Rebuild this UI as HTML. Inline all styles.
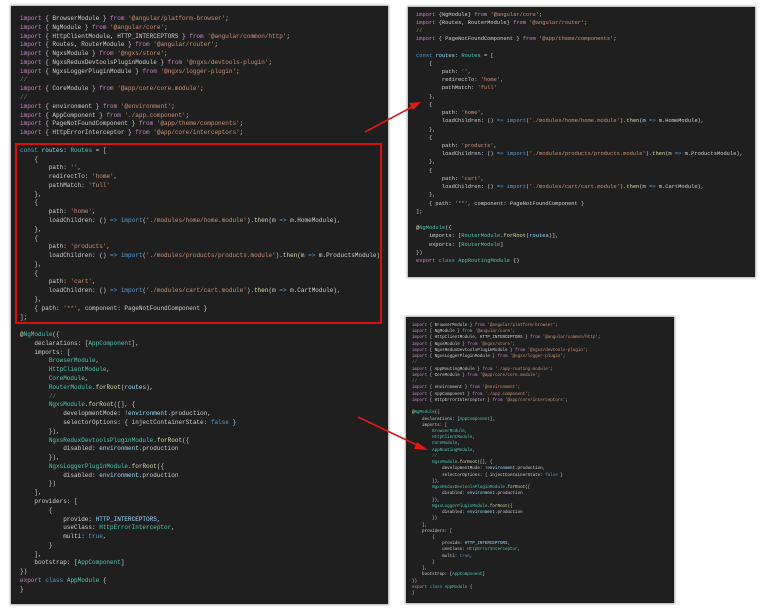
<!DOCTYPE html>
<html><head><meta charset="utf-8">
<style>
html,body{margin:0;padding:0;background:#fff;width:768px;height:610px;overflow:hidden;position:relative}
.p{position:absolute;background:#1f1f1f;box-shadow:0 0 2px 1px #aaa;}
pre{position:absolute;margin:0;font-family:"Liberation Mono",monospace;color:#d0d0d0;white-space:pre}
.k{color:#c586c0}.s{color:#ce9178}.c{color:#6a9955}.b{color:#569cd6}.t{color:#4ec9b0}.f{color:#dcdcaa}.v{color:#9cdcfe}
</style></head><body>

<div class="p" style="left:11px;top:6px;width:377px;height:598px"></div>
<pre style="left:20px;top:15px;font-size:6px;line-height:8.78px"><span class="k">import</span> { BrowserModule } <span class="k">from</span> <span class="s">'@angular/platform-browser'</span>;
<span class="k">import</span> { NgModule } <span class="k">from</span> <span class="s">'@angular/core'</span>;
<span class="k">import</span> { HttpClientModule, HTTP_INTERCEPTORS } <span class="k">from</span> <span class="s">'@angular/common/http'</span>;
<span class="k">import</span> { Routes, RouterModule } <span class="k">from</span> <span class="s">'@angular/router'</span>;
<span class="k">import</span> { NgxsModule } <span class="k">from</span> <span class="s">'@ngxs/store'</span>;
<span class="k">import</span> { NgxsReduxDevtoolsPluginModule } <span class="k">from</span> <span class="s">'@ngxs/devtools-plugin'</span>;
<span class="k">import</span> { NgxsLoggerPluginModule } <span class="k">from</span> <span class="s">'@ngxs/logger-plugin'</span>;
<span class="c">//</span>
<span class="k">import</span> { CoreModule } <span class="k">from</span> <span class="s">'@app/core/core.module'</span>;
<span class="c">//</span>
<span class="k">import</span> { environment } <span class="k">from</span> <span class="s">'@environment'</span>;
<span class="k">import</span> { AppComponent } <span class="k">from</span> <span class="s">'./app.component'</span>;
<span class="k">import</span> { PageNotFoundComponent } <span class="k">from</span> <span class="s">'@app/theme/components'</span>;
<span class="k">import</span> { HttpErrorInterceptor } <span class="k">from</span> <span class="s">'@app/core/interceptors'</span>;

<span class="b">const</span> <span class="v">routes</span>: <span class="t">Routes</span> = [
    {
        path: <span class="s">''</span>,
        redirectTo: <span class="s">'home'</span>,
        pathMatch: <span class="s">'full'</span>
    },
    {
        path: <span class="s">'home'</span>,
        loadChildren: () <span class="b">=&gt;</span> <span class="b">import</span>(<span class="s">'./modules/home/home.module'</span>).<span class="f">then</span>(m <span class="b">=&gt;</span> m.HomeModule),
    },
    {
        path: <span class="s">'products'</span>,
        loadChildren: () <span class="b">=&gt;</span> <span class="b">import</span>(<span class="s">'./modules/products/products.module'</span>).<span class="f">then</span>(m <span class="b">=&gt;</span> m.ProductsModule),
    },
    {
        path: <span class="s">'cart'</span>,
        loadChildren: () <span class="b">=&gt;</span> <span class="b">import</span>(<span class="s">'./modules/cart/cart.module'</span>).<span class="f">then</span>(m <span class="b">=&gt;</span> m.CartModule),
    },
    { path: <span class="s">'**'</span>, component: PageNotFoundComponent }
];

<span class="f">@</span><span class="t">NgModule</span>({
    declarations: [<span class="t">AppComponent</span>],
    imports: [
        <span class="t">BrowserModule</span>,
        <span class="t">HttpClientModule</span>,
        <span class="t">CoreModule</span>,
        <span class="t">RouterModule</span>.<span class="f">forRoot</span>(<span class="v">routes</span>),
        <span class="c">//</span>
        <span class="t">NgxsModule</span>.<span class="f">forRoot</span>([], {
            developmentMode: !<span class="v">environment</span>.production,
            selectorOptions: { injectContainerState: <span class="b">false</span> }
        }),
        <span class="t">NgxsReduxDevtoolsPluginModule</span>.<span class="f">forRoot</span>({
            disabled: <span class="v">environment</span>.production
        }),
        <span class="t">NgxsLoggerPluginModule</span>.<span class="f">forRoot</span>({
            disabled: <span class="v">environment</span>.production
        })
    ],
    providers: [
        {
            provide: <span class="v">HTTP_INTERCEPTORS</span>,
            useClass: <span class="t">HttpErrorInterceptor</span>,
            multi: <span class="b">true</span>,
        }
    ],
    bootstrap: [<span class="t">AppComponent</span>]
})
<span class="k">export</span> <span class="b">class</span> <span class="t">AppModule</span> {
}</pre>
<div style="position:absolute;left:15px;top:143px;width:363px;height:177px;border:2px solid #d41010"></div>

<div class="p" style="left:408px;top:7px;width:347px;height:270px"></div>
<pre style="left:416px;top:10.5px;font-size:5.4px;line-height:8.22px"><span class="k">import</span> {NgModule} <span class="k">from</span> <span class="s">'@angular/core'</span>;
<span class="k">import</span> {Routes, RouterModule} <span class="k">from</span> <span class="s">'@angular/router'</span>;
<span class="c">//</span>
<span class="k">import</span> { PageNotFoundComponent } <span class="k">from</span> <span class="s">'@app/theme/components'</span>;

<span class="b">const</span> <span class="v">routes</span>: <span class="t">Routes</span> = [
    {
        path: <span class="s">''</span>,
        redirectTo: <span class="s">'home'</span>,
        pathMatch: <span class="s">'full'</span>
    },
    {
        path: <span class="s">'home'</span>,
        loadChildren: () <span class="b">=&gt;</span> <span class="b">import</span>(<span class="s">'./modules/home/home.module'</span>).<span class="f">then</span>(m <span class="b">=&gt;</span> m.HomeModule),
    },
    {
        path: <span class="s">'products'</span>,
        loadChildren: () <span class="b">=&gt;</span> <span class="b">import</span>(<span class="s">'./modules/products/products.module'</span>).<span class="f">then</span>(m <span class="b">=&gt;</span> m.ProductsModule),
    },
    {
        path: <span class="s">'cart'</span>,
        loadChildren: () <span class="b">=&gt;</span> <span class="b">import</span>(<span class="s">'./modules/cart/cart.module'</span>).<span class="f">then</span>(m <span class="b">=&gt;</span> m.CartModule),
    },
    { path: <span class="s">'**'</span>, component: PageNotFoundComponent }
];

<span class="f">@</span><span class="t">NgModule</span>({
    imports: [<span class="t">RouterModule</span>.<span class="f">forRoot</span>(<span class="v">routes</span>)],
    exports: [<span class="t">RouterModule</span>]
})
<span class="k">export</span> <span class="b">class</span> <span class="t">AppRoutingModule</span> {}</pre>

<div class="p" style="left:406px;top:317px;width:268px;height:286px"></div>
<pre style="left:412px;top:323px;font-size:4.2px;line-height:6.23px"><span class="k">import</span> { BrowserModule } <span class="k">from</span> <span class="s">'@angular/platform-browser'</span>;
<span class="k">import</span> { NgModule } <span class="k">from</span> <span class="s">'@angular/core'</span>;
<span class="k">import</span> { HttpClientModule, HTTP_INTERCEPTORS } <span class="k">from</span> <span class="s">'@angular/common/http'</span>;
<span class="k">import</span> { NgxsModule } <span class="k">from</span> <span class="s">'@ngxs/store'</span>;
<span class="k">import</span> { NgxsReduxDevtoolsPluginModule } <span class="k">from</span> <span class="s">'@ngxs/devtools-plugin'</span>;
<span class="k">import</span> { NgxsLoggerPluginModule } <span class="k">from</span> <span class="s">'@ngxs/logger-plugin'</span>;
<span class="c">//</span>
<span class="k">import</span> { AppRoutingModule } <span class="k">from</span> <span class="s">'./app-routing.module'</span>;
<span class="k">import</span> { CoreModule } <span class="k">from</span> <span class="s">'@app/core/core.module'</span>;
<span class="c">//</span>
<span class="k">import</span> { environment } <span class="k">from</span> <span class="s">'@environment'</span>;
<span class="k">import</span> { AppComponent } <span class="k">from</span> <span class="s">'./app.component'</span>;
<span class="k">import</span> { HttpErrorInterceptor } <span class="k">from</span> <span class="s">'@app/core/interceptors'</span>;

<span class="f">@</span><span class="t">NgModule</span>({
    declarations: [<span class="t">AppComponent</span>],
    imports: [
        <span class="t">BrowserModule</span>,
        <span class="t">HttpClientModule</span>,
        <span class="t">CoreModule</span>,
        <span class="t">AppRoutingModule</span>,
        <span class="c">//</span>
        <span class="t">NgxsModule</span>.<span class="f">forRoot</span>([], {
            developmentMode: !<span class="v">environment</span>.production,
            selectorOptions: { injectContainerState: <span class="b">false</span> }
        }),
        <span class="t">NgxsReduxDevtoolsPluginModule</span>.<span class="f">forRoot</span>({
            disabled: <span class="v">environment</span>.production
        }),
        <span class="t">NgxsLoggerPluginModule</span>.<span class="f">forRoot</span>({
            disabled: <span class="v">environment</span>.production
        })
    ],
    providers: [
        {
            provide: <span class="v">HTTP_INTERCEPTORS</span>,
            useClass: <span class="t">HttpErrorInterceptor</span>,
            multi: <span class="b">true</span>,
        }
    ],
    bootstrap: [<span class="t">AppComponent</span>]
})
<span class="k">export</span> <span class="b">class</span> <span class="t">AppModule</span> {
}</pre>

<svg width="768" height="610" style="position:absolute;left:0;top:0">
<line x1="365" y1="132" x2="412" y2="107" stroke="#e01818" stroke-width="1.6"/>
<polygon points="421,102 409,103 413,110" fill="#e01818"/>
<line x1="358" y1="417" x2="419" y2="446" stroke="#e01818" stroke-width="1.6"/>
<polygon points="428,450 417,442 414,449" fill="#e01818"/>
</svg>
</body></html>
